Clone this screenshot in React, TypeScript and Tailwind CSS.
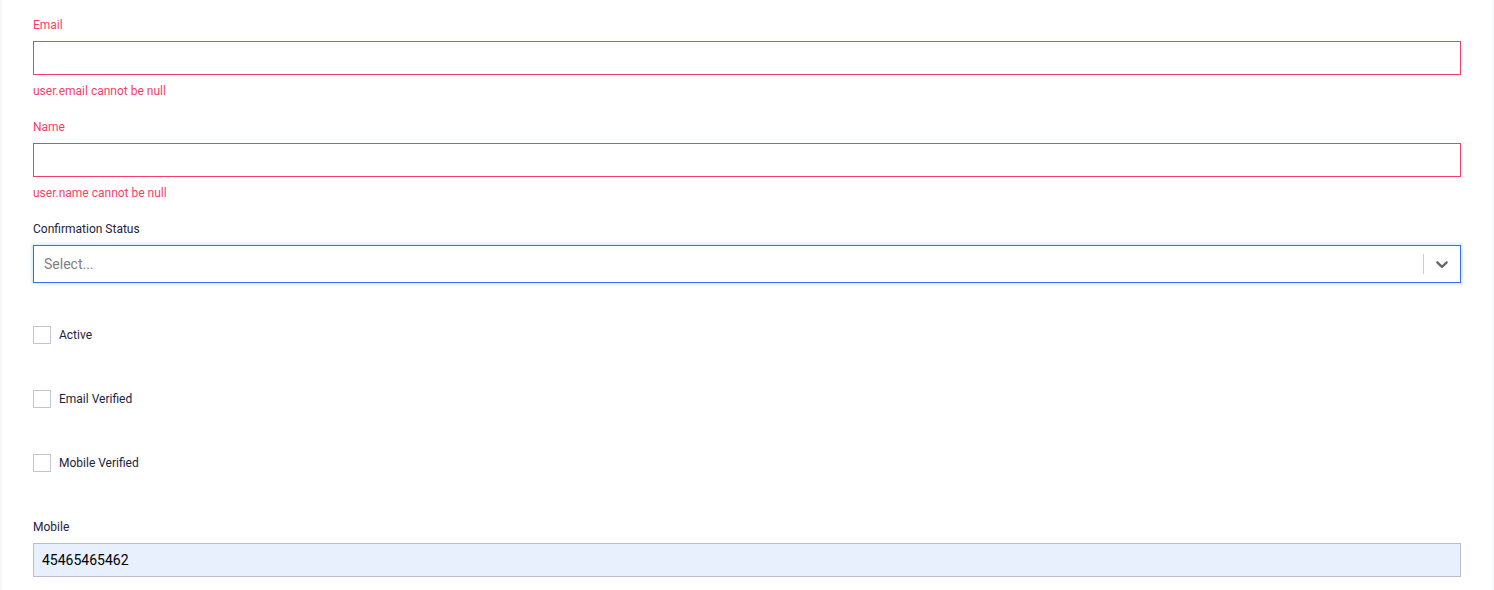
import React from "react";

const font = { fontFamily: "Roboto, 'Liberation Sans', sans-serif" };

function ErrorField({ label, error }: { label: string; error: string }) {
  return (
    <div className="flex flex-col">
      <label className="text-[12px] leading-4 text-[#f23f69]">{label}</label>
      <input className="mt-[8px] h-[34px] w-full border border-[#f23f69] bg-white px-2.5 text-[14px] outline-none" />
      <span className="mt-[8px] text-[12px] leading-4 text-[#f23f69]">{error}</span>
    </div>
  );
}

function Check({ label }: { label: string }) {
  return (
    <label className="flex items-center gap-2">
      <span className="h-[18px] w-[18px] border border-[#c4c4cc] bg-white" />
      <span className="text-[12px] leading-4 text-[#23233a]">{label}</span>
    </label>
  );
}

export default function App() {
  return (
    <main className="min-h-screen w-full bg-[#f6f7fa] px-[2px]" style={font}>
      <div className="flex min-h-[590px] flex-col bg-white px-[31px] pt-[17px]">
        <ErrorField label="Email" error="user.email cannot be null" />
        <div className="mt-[20px]">
          <ErrorField label="Name" error="user.name cannot be null" />
        </div>

        {/* Select, focused */}
        <div className="mt-[20px] flex flex-col">
          <label className="text-[12px] leading-4 text-[#23233a]">Confirmation Status</label>
          <div className="mt-[8px] flex h-[38px] items-center border border-[#3b6cf6] bg-white shadow-[0_0_3px_1px_rgba(80,190,255,0.35)]">
            <span className="flex-1 px-2.5 text-[14px] text-[#808080]">Select...</span>
            <span className="h-[20px] w-px bg-[#cccccc]" />
            <span className="flex w-[36px] items-center justify-center text-[#666666]">
              <svg width="20" height="20" viewBox="0 0 20 20" fill="currentColor">
                <path d="M4.516 7.548c0.436-0.446 1.043-0.481 1.576 0l3.908 3.747 3.908-3.747c0.533-0.481 1.141-0.446 1.574 0 0.436 0.445 0.408 1.197 0 1.615-0.406 0.418-4.695 4.502-4.695 4.502-0.217 0.223-0.502 0.335-0.787 0.335s-0.57-0.112-0.789-0.335c0 0-4.287-4.084-4.695-4.502s-0.436-1.17 0-1.615z" />
              </svg>
            </span>
          </div>
        </div>

        <div className="mt-[43px] flex flex-col gap-[46px]">
          <Check label="Active" />
          <Check label="Email Verified" />
          <Check label="Mobile Verified" />
        </div>

        <div className="mt-[47px] flex flex-col">
          <label className="text-[12px] leading-4 text-[#23233a]">Mobile</label>
          <input
            defaultValue="45465465462"
            className="mt-[8px] h-[34px] w-full border border-[#b9bccb] bg-[#e8f0fe] px-2 text-[14px] text-black outline-none"
          />
        </div>
      </div>
    </main>
  );
}
